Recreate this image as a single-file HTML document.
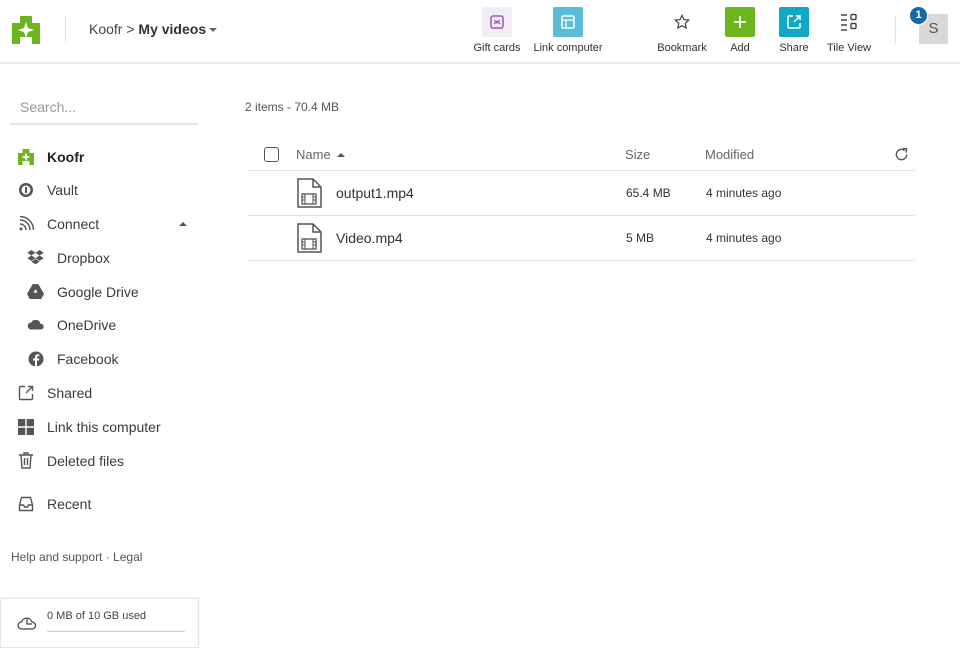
<!DOCTYPE html>
<html><head><meta charset="utf-8"><style>
*{margin:0;padding:0;box-sizing:border-box}
body{width:960px;height:640px;overflow:hidden;background:#fff;font-family:"Liberation Sans",sans-serif;color:#3b3b3b;position:relative}
.a{position:absolute;white-space:nowrap}
.hdr{position:absolute;left:0;top:0;width:960px;height:64px;border-bottom:2px solid #e8e8e8;background:#fff}
.tb{position:absolute;font-size:11px;color:#333;text-align:center;transform:translateX(-50%)}
.box{position:absolute;width:30px;height:30px;border-radius:2px}
.nav{position:absolute;font-size:14px;color:#3b3b3b}
.ic{position:absolute}
.line{position:absolute;left:248px;width:667px;height:1px;background:#e3e3e3}
</style></head><body>
<div class="hdr">
  <svg class="ic" style="left:12px;top:16px" width="28" height="28" viewBox="0 0 28 28"><path fill="#6cb51f" d="M8 0h12v7h8v21h-8v-7H8v7H0V7h8z"/><path fill="#fff" d="M14 6l2 6 6 2-6 2-2 6-2-6-6-2 6-2z"/></svg>
  <div class="a" style="left:65px;top:15px;width:1px;height:28px;background:#e3e3e3"></div>
  <div class="a" style="left:89px;top:21px;font-size:14px;color:#444">Koofr &gt; <b style="color:#333;font-weight:600">My videos</b></div>
  <svg class="ic" style="left:209px;top:28px" width="8" height="4"><path d="M0 0h8L4 4z" fill="#666"/></svg>

  <div class="box" style="left:482px;top:7px;background:#f3eef6"></div>
  <svg class="ic" style="left:489px;top:14px" width="16" height="16" viewBox="0 0 16 16"><rect x="2" y="2" width="12" height="12" rx="2" fill="none" stroke="#9b59b6" stroke-width="1.5"/><path d="M5 6l3 3 3-3M5 10l3-3 3 3" fill="none" stroke="#9b59b6" stroke-width="1.2"/></svg>
  <div class="tb" style="left:497px;top:42px">Gift cards</div>
  <div class="box" style="left:553px;top:7px;background:#5bbcd6"></div>
  <svg class="ic" style="left:560px;top:14px" width="16" height="16" viewBox="0 0 16 16"><rect x="2" y="2" width="12" height="12" rx="1" fill="none" stroke="#fff" stroke-width="1.5"/><path d="M2 6h12M6 6v8" stroke="#fff" stroke-width="1.3"/></svg>
  <div class="tb" style="left:568px;top:42px">Link computer</div>
  <svg class="ic" style="left:673px;top:13px" width="18" height="18" viewBox="0 0 24 24"><path d="M12 3l2.7 5.8 6.3.7-4.7 4.3 1.3 6.2L12 16.9 6.4 20l1.3-6.2L3 9.5l6.3-.7z" fill="none" stroke="#444" stroke-width="1.6"/></svg>
  <div class="tb" style="left:682px;top:42px">Bookmark</div>
  <div class="box" style="left:725px;top:7px;background:#6cb51f"></div>
  <svg class="ic" style="left:733px;top:15px" width="14" height="14"><path d="M7 1v12M1 7h12" stroke="#fff" stroke-width="1.8"/></svg>
  <div class="tb" style="left:740px;top:42px">Add</div>
  <div class="box" style="left:779px;top:7px;background:#10a9c4"></div>
  <svg class="ic" style="left:786px;top:14px" width="16" height="16" viewBox="0 0 16 16"><path d="M7 2H3a1 1 0 0 0-1 1v10a1 1 0 0 0 1 1h10a1 1 0 0 0 1-1V9" fill="none" stroke="#fff" stroke-width="1.5"/><path d="M8 8l6-6M10 2h4v4" fill="none" stroke="#fff" stroke-width="1.5"/></svg>
  <div class="tb" style="left:794px;top:42px">Share</div>
  <svg class="ic" style="left:840px;top:13px" width="18" height="18" viewBox="0 0 18 18"><path d="M1 2h6M1 7h6M1 12h6M1 17h6" stroke="#444" stroke-width="1.6"/><rect x="11" y="1.5" width="5" height="5" rx="1" fill="none" stroke="#444" stroke-width="1.4"/><rect x="11" y="10.5" width="5" height="5" rx="1" fill="none" stroke="#444" stroke-width="1.4"/></svg>
  <div class="tb" style="left:849px;top:42px">Tile View</div>
  <div class="a" style="left:895px;top:15px;width:1px;height:28px;background:#e3e3e3"></div>
  <div class="a" style="left:919px;top:14px;width:29px;height:30px;background:#d8d8d8;border-radius:2px;font-size:15px;color:#555;text-align:center;line-height:30px">S</div>
  <div class="a" style="left:909px;top:6px;width:19px;height:19px;border-radius:50%;background:#1768a9;border:1.5px solid #fff;color:#fff;font-size:11px;font-weight:bold;text-align:center;line-height:16px">1</div>
</div>

<div class="a" style="left:20px;top:99px;font-size:14px;color:#999">Search...</div>
<div class="a" style="left:10px;top:123px;width:188px;height:2px;background:#e5e5e5"></div>

<svg class="ic" style="left:18px;top:149px" width="16" height="16" viewBox="0 0 28 28"><path fill="#6cb51f" d="M8 0h12v7h8v21h-8v-7H8v7H0V7h8z"/><path fill="#fff" d="M14 6l2 6 6 2-6 2-2 6-2-6-6-2 6-2z"/></svg>
<div class="nav" style="left:47px;top:149px;font-weight:bold;color:#222">Koofr</div>
<svg class="ic" style="left:18px;top:182px" width="16" height="16" viewBox="0 0 16 16"><circle cx="8" cy="8" r="7" fill="#555"/><circle cx="8" cy="8" r="4.5" fill="#fff"/><rect x="7" y="5" width="2" height="6" fill="#555"/></svg>
<div class="nav" style="left:47px;top:182px">Vault</div>
<svg class="ic" style="left:18px;top:216px" width="16" height="16" viewBox="0 0 16 16"><circle cx="3" cy="13" r="1.5" fill="#555"/><path d="M2 8a6 6 0 0 1 6 6M2 4a10 10 0 0 1 10 10M2 0.5a13.5 13.5 0 0 1 13.5 13.5" fill="none" stroke="#555" stroke-width="1.4"/></svg>
<div class="nav" style="left:47px;top:216px">Connect</div>
<svg class="ic" style="left:179px;top:222px" width="8" height="4"><path d="M0 4h8L4 0z" fill="#555"/></svg>

<svg class="ic" style="left:27px;top:250px" width="17" height="15" viewBox="0 0 24 22"><path fill="#555" d="M6 0l6 4-6 4-6-4zM18 0l6 4-6 4-6-4zM0 12l6-4 6 4-6 4zM24 12l-6-4-6 4 6 4zM6 17l6-4 6 4-6 4z"/></svg>
<div class="nav" style="left:57px;top:250px">Dropbox</div>
<svg class="ic" style="left:27px;top:284px" width="17" height="15" viewBox="0 0 24 21"><path fill="#555" d="M8 0h8l8 14-4 7H4l-4-7z"/><path fill="#fff" d="M12 7l3 5H9z"/></svg>
<div class="nav" style="left:57px;top:284px">Google Drive</div>
<svg class="ic" style="left:27px;top:319px" width="17" height="11" viewBox="0 0 24 14"><path fill="#555" d="M5 14a5 5 0 0 1 1-9.9A7 7 0 0 1 19 6a4 4 0 0 1 1 8z"/></svg>
<div class="nav" style="left:57px;top:317px">OneDrive</div>
<svg class="ic" style="left:28px;top:351px" width="16" height="16" viewBox="0 0 16 16"><circle cx="8" cy="8" r="7.5" fill="#555"/><path d="M9 16V9.5h2l.3-2H9V6.3c0-.6.2-1 1-1h1.3V3.5c-.3 0-1-.1-1.8-.1C7.8 3.4 7 4.4 7 6v1.5H5v2h2V16z" fill="#fff"/></svg>
<div class="nav" style="left:57px;top:351px">Facebook</div>
<svg class="ic" style="left:18px;top:385px" width="16" height="16" viewBox="0 0 16 16"><path d="M7 1.5H2.5a1 1 0 0 0-1 1v11a1 1 0 0 0 1 1h11a1 1 0 0 0 1-1V9" fill="none" stroke="#555" stroke-width="1.4"/><path d="M8 8l6.5-6.5M10 1.5h4.5V6" fill="none" stroke="#555" stroke-width="1.4"/></svg>
<div class="nav" style="left:47px;top:385px">Shared</div>
<svg class="ic" style="left:18px;top:419px" width="16" height="16" viewBox="0 0 16 16"><path fill="#555" d="M0 0h7.3v7.3H0zM8.7 0H16v7.3H8.7zM0 8.7h7.3V16H0zM8.7 8.7H16V16H8.7z"/></svg>
<div class="nav" style="left:47px;top:419px">Link this computer</div>
<svg class="ic" style="left:18px;top:452px" width="16" height="17" viewBox="0 0 16 17"><path d="M1 3h14M6 3V1h4v2M3 3l1 13h8l1-13M6.5 6v7M9.5 6v7" fill="none" stroke="#555" stroke-width="1.4"/></svg>
<div class="nav" style="left:47px;top:453px">Deleted files</div>
<svg class="ic" style="left:18px;top:496px" width="16" height="16" viewBox="0 0 16 16"><path d="M1.5 9l2-7.5h9l2 7.5v5.5h-13zM1.5 9h4l1 2h3l1-2h4" fill="none" stroke="#555" stroke-width="1.4"/></svg>
<div class="nav" style="left:47px;top:496px">Recent</div>

<div class="a" style="left:11px;top:550px;font-size:12px;color:#555">Help and support · Legal</div>
<div class="a" style="left:0;top:598px;width:199px;height:50px;border:1px solid #e5e5e5;box-shadow:0 0 3px rgba(0,0,0,.08)"></div>
<svg class="ic" style="left:17px;top:616px" width="19" height="14" viewBox="0 0 19 14"><path d="M4.5 13a3.5 3.5 0 0 1 0-7A5.5 5.5 0 0 1 15 6a3.5 3.5 0 0 1 0 7zM10 3v5h5" fill="none" stroke="#444" stroke-width="1.2"/></svg>
<div class="a" style="left:47px;top:610px;font-size:11px;color:#444">0 MB of 10 GB used</div>
<div class="a" style="left:47px;top:631px;width:138px;height:1px;background:#ccc"></div>

<div class="a" style="left:245px;top:100px;font-size:12px;color:#555">2 items - 70.4 MB</div>
<div class="a" style="left:264px;top:147px;width:15px;height:15px;border:1.5px solid #555;border-radius:3px"></div>
<div class="a" style="left:296px;top:147px;font-size:13px;color:#666">Name</div>
<svg class="ic" style="left:337px;top:153px" width="8" height="4"><path d="M0 4h8L4 0z" fill="#555"/></svg>
<div class="a" style="left:625px;top:147px;font-size:13px;color:#666">Size</div>
<div class="a" style="left:705px;top:147px;font-size:13px;color:#666">Modified</div>
<svg class="ic" style="left:894px;top:147px" width="15" height="15" viewBox="0 0 16 16"><path d="M13.5 8A5.5 5.5 0 1 1 11.5 3.8" fill="none" stroke="#555" stroke-width="1.5"/><path d="M9.5 1.5l4 .5-.5 4" fill="none" stroke="#555" stroke-width="1.5"/></svg>
<div class="line" style="top:170px"></div>
<div class="line" style="top:215px"></div>
<div class="line" style="top:260px"></div>

<svg class="ic" style="left:297px;top:178px" width="25" height="30" viewBox="0 0 25 30"><path d="M1 1h15l8 8v20H1z M16 1v8h8" fill="none" stroke="#555" stroke-width="1.5"/><rect x="5" y="16" width="14" height="10" fill="none" stroke="#555" stroke-width="1.3"/><path d="M8 16v10M16 16v10M5 19h3M5 22h3M16 19h3M16 22h3" stroke="#555" stroke-width="1"/></svg>
<div class="a" style="left:336px;top:185px;font-size:14px;color:#333">output1.mp4</div>
<div class="a" style="left:626px;top:186px;font-size:12px;color:#333">65.4 MB</div>
<div class="a" style="left:706px;top:186px;font-size:12px;color:#333">4 minutes ago</div>

<svg class="ic" style="left:297px;top:223px" width="25" height="30" viewBox="0 0 25 30"><path d="M1 1h15l8 8v20H1z M16 1v8h8" fill="none" stroke="#555" stroke-width="1.5"/><rect x="5" y="16" width="14" height="10" fill="none" stroke="#555" stroke-width="1.3"/><path d="M8 16v10M16 16v10M5 19h3M5 22h3M16 19h3M16 22h3" stroke="#555" stroke-width="1"/></svg>
<div class="a" style="left:336px;top:230px;font-size:14px;color:#333">Video.mp4</div>
<div class="a" style="left:626px;top:231px;font-size:12px;color:#333">5 MB</div>
<div class="a" style="left:706px;top:231px;font-size:12px;color:#333">4 minutes ago</div>
</body></html>
